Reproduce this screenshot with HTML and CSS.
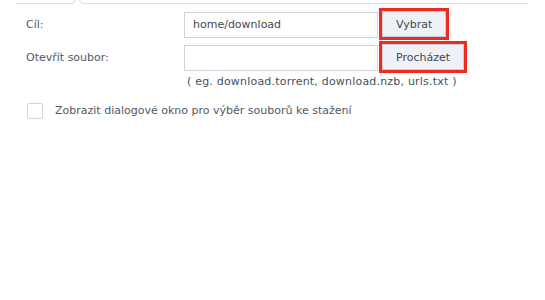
FILE: index.html
```html
<!DOCTYPE html>
<html lang="cs">
<head>
<meta charset="utf-8">
<link rel="stylesheet" href="styles.css">
</head>
<body>
<div class="tabbar"><span class="notch"></span></div>
<div class="form">
  <div class="label">Cíl:</div>
  <div class="field">home/download</div>
  <div class="hl"><button class="btn">Vybrat</button></div>

  <div class="label">Otevřít soubor:</div>
  <div class="field"></div>
  <div class="hl"><button class="btn">Procházet</button></div>

  <div class="hint">( eg. download.torrent, download.nzb, urls.txt )</div>
</div>
<div class="check">
  <span class="box"></span>
  <span class="check-text">Zobrazit dialogové okno pro výběr souborů ke stažení</span>
</div>
</body>
</html>
```

FILE: styles.css
```css
html, body {
  margin: 0;
  padding: 0;
  background: #ffffff;
}
body {
  width: 545px;
  height: 300px;
  font-family: "DejaVu Sans", Verdana, sans-serif;
  font-size: 11px;
  color: #505a64;
  overflow: hidden;
}
.tabbar {
  position: relative;
  margin: 0 17px 0 16px;
  height: 3px;
  border-bottom: 1px solid #dde2e7;
}
.notch {
  position: absolute;
  left: 58px;
  top: -1px;
  width: 6px;
  height: 6px;
  background: #fff;
  border-left: 1px solid #dde2e7;
  border-top: 1px solid #dde2e7;
  transform: rotate(45deg);
}
.form {
  display: grid;
  grid-template-columns: 157px 194px auto;
  grid-template-rows: 32px 32px auto;
  column-gap: 1px;
  row-gap: 1px;
  align-items: center;
  justify-items: start;
  padding: 4px 0 0 26px;
}
.label {
  line-height: 14px;
  padding-top: 2px;
}
.field {
  box-sizing: border-box;
  width: 194px;
  height: 26px;
  margin-top: 1px;
  border: 1px solid #cdd3da;
  background: #fff;
  padding: 0 8px;
  line-height: 24px;
  color: #3f4851;
}
.hl {
  border: 3px solid #ee2a22;
  display: flex;
}
.btn {
  box-sizing: border-box;
  height: 26px;
  padding: 0 13px;
  border: 1px solid #c9d0d8;
  background: #eef2f7;
  font-family: "DejaVu Sans", Verdana, sans-serif;
  font-size: 11px;
  color: #3f4851;
  margin: 0;
}
.hint {
  grid-column: 2 / 4;
  white-space: nowrap;
  padding: 1px 0 0 3px;
  line-height: 14px;
  letter-spacing: 0.2px;
  color: #46505a;
}
.check {
  display: flex;
  align-items: center;
  gap: 12px;
  margin: 14px 0 0 27px;
}
.box {
  box-sizing: border-box;
  width: 16px;
  height: 16px;
  border: 1px solid #cfd5dc;
  border-radius: 2px;
  background: #fff;
}
.check-text {
  line-height: 14px;
}
```
